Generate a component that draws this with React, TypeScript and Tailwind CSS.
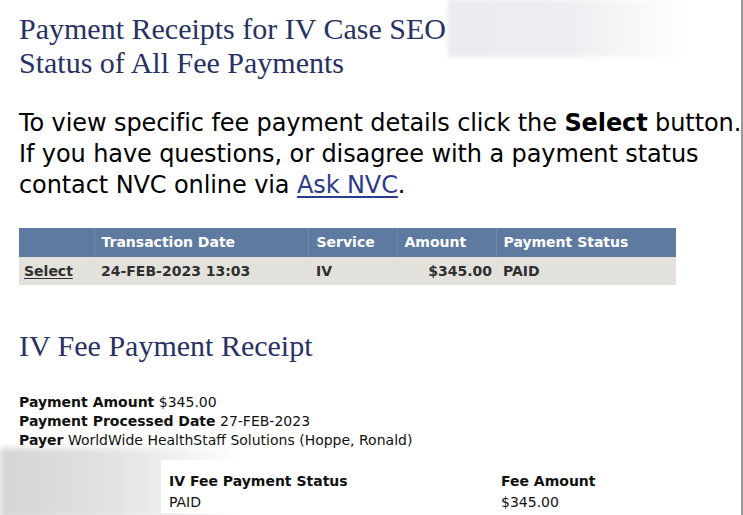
const serif = { fontFamily: '"Liberation Serif", "Times New Roman", serif' };

function Heading({ children }: { children: React.ReactNode }) {
  return (
    <h1 className="text-[30px] leading-[34px] text-[#283163]" style={serif}>
      {children}
    </h1>
  );
}

export default function App() {
  return (
    <div className="relative w-[743px] h-[515px] overflow-hidden bg-white border-r-2 border-[#9a9a9a] font-['DejaVu_Sans',Verdana,sans-serif] text-black">
      {/* blurred patches */}
      <div className="absolute left-[448px] top-0 w-[240px] h-[57px] bg-gradient-to-r from-[#ebebf0] via-[#eeeef2] to-white blur-[2px]" />
      <div className="absolute left-0 top-[448px] w-[240px] h-[70px] bg-gradient-to-r from-[#d4d4d4] via-[#e4e4e4] to-white blur-[3px]" />

      <div className="relative px-[19px] pt-[12px]">
        <Heading>Payment Receipts for IV Case SEO</Heading>
        <Heading>Status of All Fee Payments</Heading>

        <p className="mt-[28px] text-[24px] leading-[31px] tracking-[-0.1px] whitespace-nowrap">
          To view specific fee payment details click the <b>Select</b> button.
          <br />
          If you have questions, or disagree with a payment status
          <br />
          contact NVC online via{" "}
          <a href="#" className="text-[#2b3a8c] underline underline-offset-[3px]">
            Ask NVC
          </a>
          .
        </p>

        <table className="mt-[27px] w-[657px] border-collapse text-[14px] font-bold">
          <thead>
            <tr className="bg-[#5f7aa1] text-white h-[29px]">
              <th className="w-[75px] border-r border-[#7089ad]" />
              <th className="w-[214px] text-left pl-[7px] border-r border-[#7089ad]">Transaction Date</th>
              <th className="w-[89px] text-left pl-[8px] border-r border-[#7089ad]">Service</th>
              <th className="w-[99px] text-left pl-[7px] border-r border-[#7089ad]">Amount</th>
              <th className="text-left pl-[7px]">Payment Status</th>
            </tr>
          </thead>
          <tbody>
            <tr className="bg-[#e3e1dc] text-[#2f2f2f] h-[28px]">
              <td className="pl-[5px]">
                <a href="#" className="underline underline-offset-2">Select</a>
              </td>
              <td className="pl-[7px]">24-FEB-2023 13:03</td>
              <td className="pl-[8px]">IV</td>
              <td className="text-right pr-[4px]">$345.00</td>
              <td className="pl-[7px]">PAID</td>
            </tr>
          </tbody>
        </table>

        <div className="mt-[44px]">
          <Heading>IV Fee Payment Receipt</Heading>
        </div>

        <div className="mt-[30px] text-[14px] leading-[19px] text-[#111]">
          <div>
            <b>Payment Amount</b> $345.00
          </div>
          <div>
            <b>Payment Processed Date</b> 27-FEB-2023
          </div>
          <div>
            <b>Payer</b> WorldWide HealthStaff Solutions (Hoppe, Ronald)
          </div>
        </div>
      </div>

      <div className="relative ml-[161px] mt-[10px] bg-white pl-[8px] pt-[11px] text-[14px] leading-[21px] text-[#111] flex">
        <div className="w-[332px]">
          <div className="font-bold">IV Fee Payment Status</div>
          <div>PAID</div>
        </div>
        <div>
          <div className="font-bold">Fee Amount</div>
          <div>$345.00</div>
        </div>
      </div>
    </div>
  );
}
